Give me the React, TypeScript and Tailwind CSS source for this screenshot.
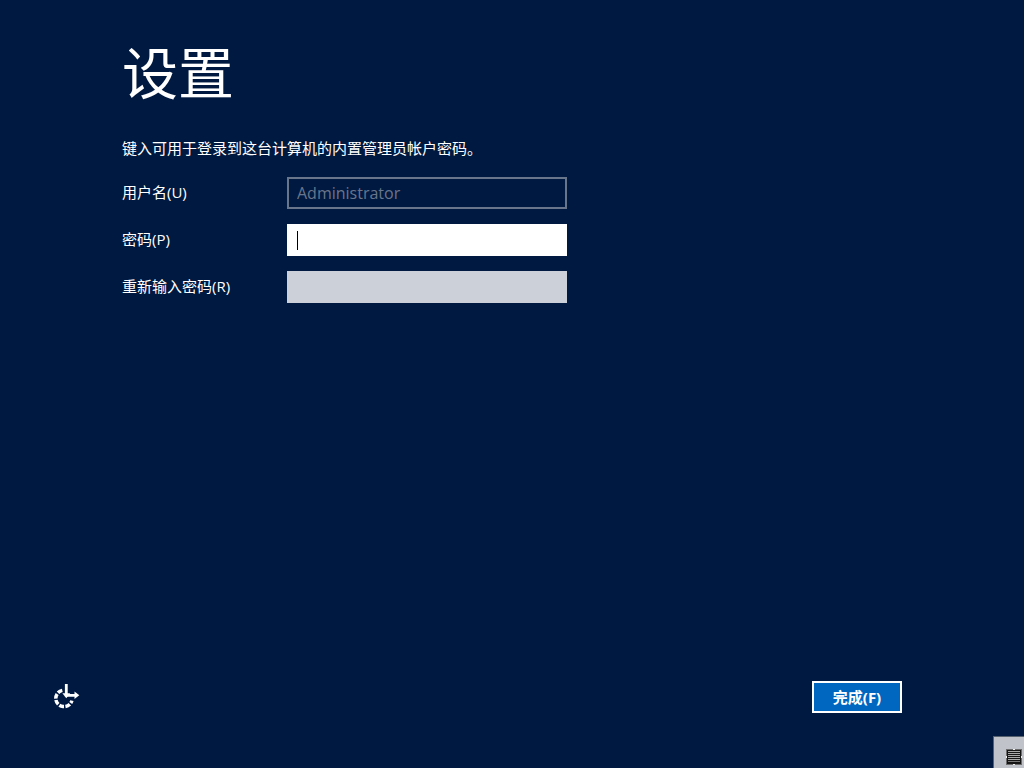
import { useState } from "react";

const FONT = "font-['Open_Sans','Noto_Sans_CJK_SC',sans-serif]";

const inputCls = "block h-8 w-full px-2 border-2 text-base outline-none rounded-none";

function EaseOfAccessIcon() {
  return (
    <svg width="28" height="28" viewBox="0 0 28 28" fill="none" aria-hidden="true">
      <path
        d="M10.3 7.4A8.2 8.2 0 1 0 19.9 17.6"
        stroke="white"
        strokeWidth="3.5"
        strokeDasharray="4.9 1.4"
      />
      <path d="M14.3 1V12.3H23" stroke="white" strokeWidth="2.8" />
      <path d="M10.4 10.2h7.8l-3.9 5z" fill="white" />
      <path d="M22.5 8.6l4.8 3.7-4.8 3.7z" fill="white" />
    </svg>
  );
}

function KeyboardIcon() {
  return (
    <svg width="16" height="16" viewBox="0 0 16 16" aria-hidden="true">
      <rect width="16" height="16" fill="#6b6b6b" />
      <rect x="1" y="1" width="14" height="14" fill="#151515" />
      <path d="M2 2.5h12M2 4.5h12M2 6.5h12M2 8.5h12M2 10.5h12" stroke="#a8a8a8" />
      <path d="M2 12.5h12" stroke="#777" />
      <path d="M7 .5h2M7 15.5h2M.5 7v2M15.5 7v2" stroke="#eee" />
    </svg>
  );
}

export default function App() {
  const [password, setPassword] = useState("");
  const [confirmation, setConfirmation] = useState("");

  return (
    <div className={`relative flex min-h-screen flex-col bg-[#001940] text-white ${FONT}`}>
      <form id="setup" className="flex-1 px-[122px] pt-[38px]" onSubmit={(e) => e.preventDefault()}>
        <h1 className="text-[56px] leading-[68px]">设置</h1>
        <p className="mt-[30px] text-[15px] leading-6">键入可用于登录到这台计算机的内置管理员帐户密码。</p>
        <div className="mt-[17px] grid grid-cols-[165px_280px] items-center gap-y-[15px] text-[15px] leading-6">
          <label htmlFor="username" className="pb-0.5">用户名(U)</label>
          <input
            id="username"
            value="Administrator"
            disabled
            className={`${inputCls} border-[#69758b] bg-transparent text-[#69758b]`}
          />
          <label htmlFor="password" className="pb-0.5">密码(P)</label>
          <div className="relative">
            <input
              id="password"
              type="password"
              value={password}
              onChange={(e) => setPassword(e.target.value)}
              className={`${inputCls} border-white bg-white text-black`}
            />
            {!password && <span className="pointer-events-none absolute left-2.5 top-[7px] h-[19px] w-px bg-black" />}
          </div>
          <label htmlFor="confirmation" className="pb-0.5">重新输入密码(R)</label>
          <input
            id="confirmation"
            type="password"
            value={confirmation}
            onChange={(e) => setConfirmation(e.target.value)}
            className={`${inputCls} border-[#ccd1d9] bg-[#ccd1d9] text-black`}
          />
        </div>
      </form>
      <footer className="flex items-center justify-between pb-[55px] pl-[52px] pr-[122px]">
        <button type="button" aria-label="轻松使用">
          <EaseOfAccessIcon />
        </button>
        <button
          type="submit"
          form="setup"
          className="flex h-8 w-[90px] items-center justify-center border-2 border-white bg-[#0067c0] text-[15px] font-bold"
        >
          完成(F)
        </button>
      </footer>
      <button
        type="button"
        aria-label="键盘"
        className="absolute bottom-0 right-0 flex h-8 w-[31px] items-end justify-end border-l border-t border-[#55606f] bg-[#c0c3ca] pb-[3px] pr-0.5"
      >
        <KeyboardIcon />
      </button>
    </div>
  );
}
